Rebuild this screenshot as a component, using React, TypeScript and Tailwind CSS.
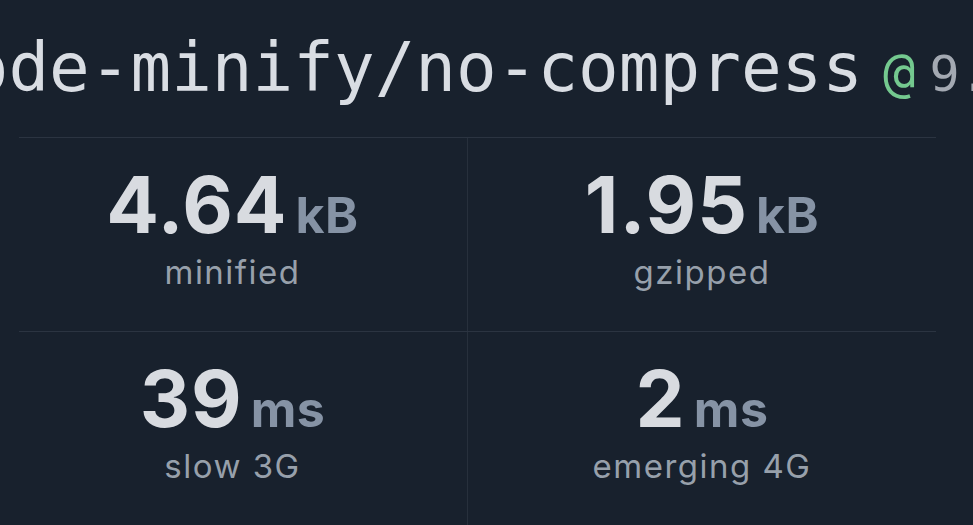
import React from "react";

const stats = [
  [
    { value: "4.64", unit: "kB", label: "minified" },
    { value: "1.95", unit: "kB", label: "gzipped" },
  ],
  [
    { value: "39", unit: "ms", label: "slow 3G" },
    { value: "2", unit: "ms", label: "emerging 4G" },
  ],
];

function Stat({ value, unit, label, right }: { value: string; unit: string; label: string; right?: boolean }) {
  return (
    <div
      className={
        "flex flex-col items-center pt-[28px] " + (right ? "border-l border-[#27303c]" : "")
      }
    >
      <div className="flex items-baseline gap-[8px]">
        <span
          className="text-[78px] leading-none font-bold tracking-[1px] text-[#d8dbe0]"
          style={{ fontFamily: "Inter, 'Noto Sans', sans-serif" }}
        >
          {value}
        </span>
        <span
          className="text-[50px] leading-none font-bold tracking-[0.5px] text-[#8693a5]"
          style={{ fontFamily: "Inter, 'Noto Sans', sans-serif" }}
        >
          {unit}
        </span>
      </div>
      <div
        className="mt-[12px] text-[33px] leading-none tracking-[1.5px] text-[#97a0ab]"
        style={{ fontFamily: "Inter, 'Noto Sans', sans-serif" }}
      >
        {label}
      </div>
    </div>
  );
}

export default function App() {
  return (
    <div className="w-[973px] h-[525px] overflow-hidden bg-[#18212d]">
      <div className="h-[137px] pt-[34px] overflow-hidden">
        <div
          className="flex items-baseline whitespace-nowrap ml-[-73px] leading-none"
          style={{ fontFamily: "'DejaVu Sans Mono', 'Liberation Mono', monospace" }}
        >
          <span className="text-[67.6px] text-[#d9dde3]">node-minify/no-compress</span>
          <span className="text-[54px] text-[#74c98f] ml-[20px]">@</span>
          <span className="text-[50px] text-[#a3a9b2] ml-[14px]">9.0.0</span>
        </div>
      </div>
      <div className="ml-[19px] w-[917px] h-px bg-[#2b3441]" />
      <div className="grid grid-cols-[469px_469px] ml-[-2px] h-[193px]">
        <Stat {...stats[0][0]} />
        <Stat {...stats[0][1]} right />
      </div>
      <div className="ml-[19px] w-[917px] h-px bg-[#2b3441]" />
      <div className="grid grid-cols-[469px_469px] ml-[-2px] h-[194px]">
        <Stat {...stats[1][0]} />
        <Stat {...stats[1][1]} right />
      </div>
    </div>
  );
}
